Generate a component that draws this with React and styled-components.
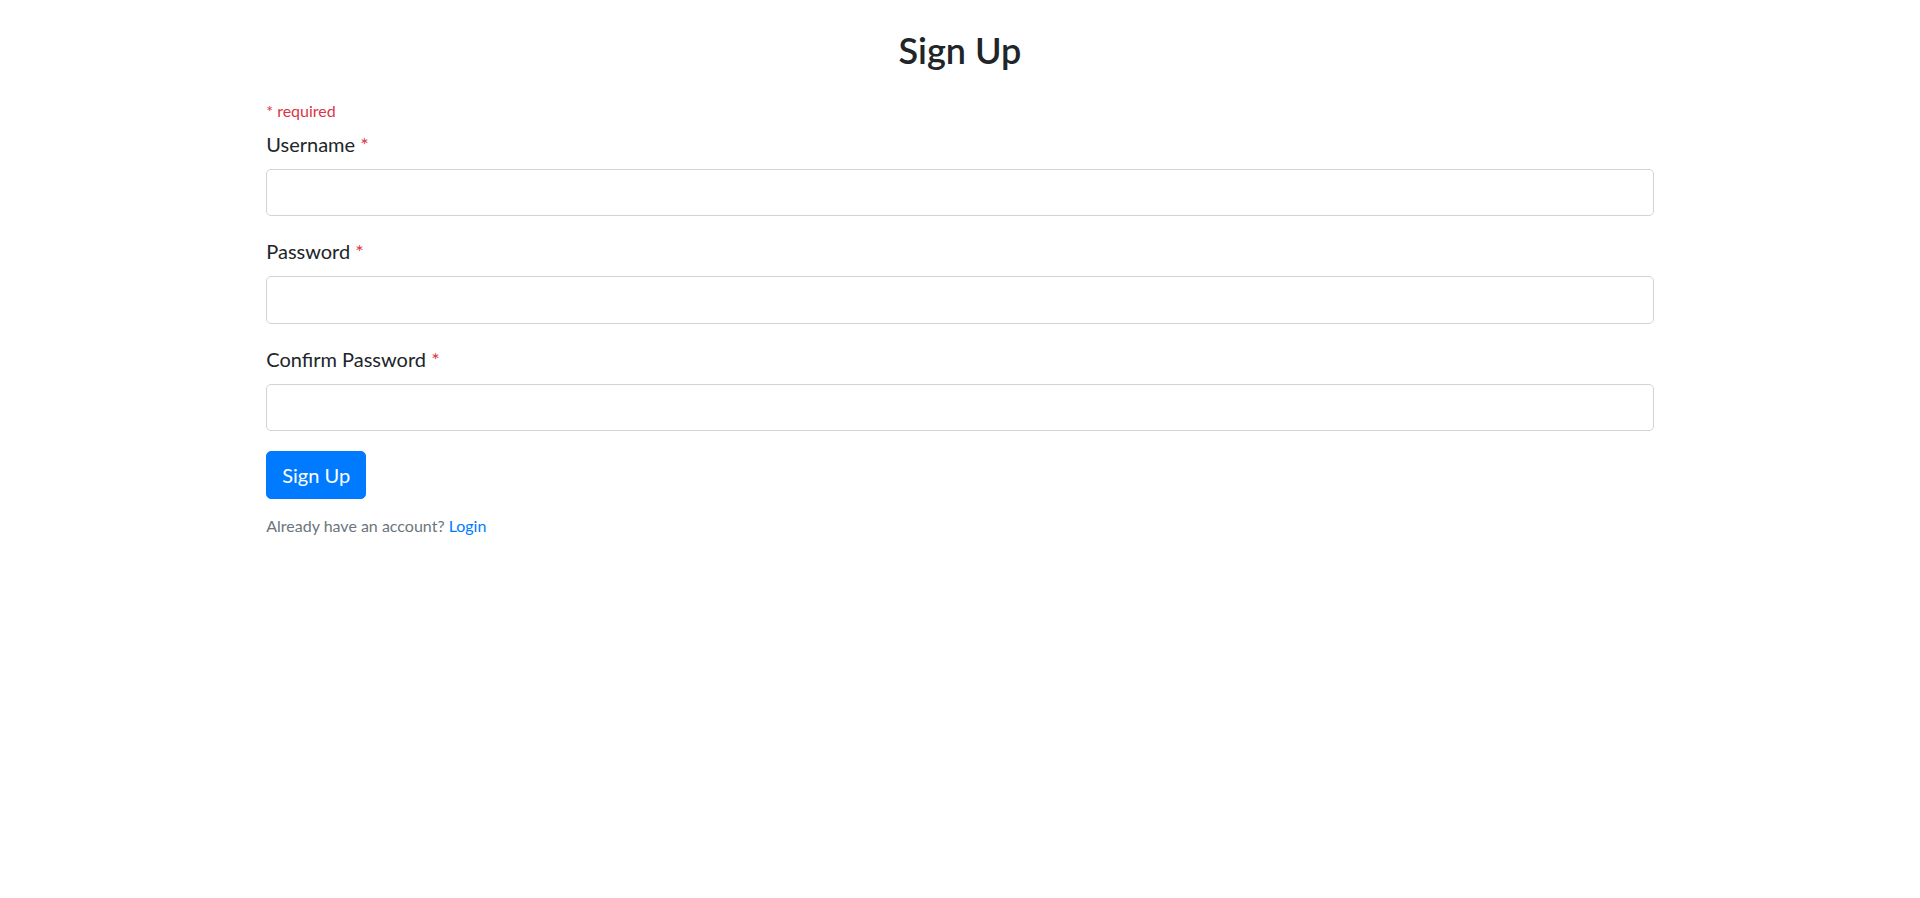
import React, { useState } from 'react';
import styled, { createGlobalStyle } from 'styled-components';

const GlobalStyle = createGlobalStyle`
  * {
    box-sizing: border-box;
  }
  body {
    margin: 0;
    background: #fff;
    color: #212529;
    font-family: Lato, "Open Sans", sans-serif;
  }
`;

const Container = styled.div`
  max-width: 1425px;
  margin: 0 auto;
  padding: 0 18.75px;
`;

const Title = styled.h1`
  margin: 29px 0 28px;
  font-size: 36px;
  line-height: 42px;
  font-weight: 600;
  text-align: center;
  color: #212529;
`;

const RequiredNote = styled.div`
  font-size: 16px;
  line-height: 24px;
  color: #dc3545;
  margin-bottom: 5.5px;
`;

const Group = styled.div`
  margin-bottom: 20px;
`;

const Label = styled.label`
  display: block;
  font-size: 20px;
  line-height: 30px;
  margin-bottom: 10px;
  color: #212529;
`;

const Star = styled.span`
  color: #dc3545;
`;

const Input = styled.input`
  display: block;
  width: 100%;
  height: 47.5px;
  padding: 7.5px 15px;
  font-size: 20px;
  font-family: inherit;
  color: #495057;
  background: #fff;
  border: 1px solid #ced4da;
  border-radius: 5px;
  outline: none;
`;

const Button = styled.button`
  display: inline-block;
  height: 47.5px;
  padding: 0 15px;
  font-size: 20px;
  font-family: inherit;
  line-height: 30px;
  color: #fff;
  background: #007bff;
  border: 1px solid #007bff;
  border-radius: 5px;
  cursor: pointer;
`;

const Footer = styled.p`
  margin: 15px 0 0;
  font-size: 16px;
  line-height: 24px;
  color: #6c757d;
`;

const LoginLink = styled.a`
  color: #007bff;
  text-decoration: none;
`;

const fields = [
  { name: 'username', label: 'Username', type: 'text' },
  { name: 'password', label: 'Password', type: 'password' },
  { name: 'confirm', label: 'Confirm Password', type: 'password' },
];

export default function App() {
  const [values, setValues] = useState({ username: '', password: '', confirm: '' });

  const onChange = (e) => setValues({ ...values, [e.target.name]: e.target.value });

  return (
    <>
      <GlobalStyle />
      <Container>
        <Title>Sign Up</Title>
        <form onSubmit={(e) => e.preventDefault()}>
          <RequiredNote>* required</RequiredNote>
          {fields.map((f) => (
            <Group key={f.name}>
              <Label htmlFor={f.name}>
                {f.label} <Star>*</Star>
              </Label>
              <Input id={f.name} name={f.name} type={f.type} value={values[f.name]} onChange={onChange} />
            </Group>
          ))}
          <Button type="submit">Sign Up</Button>
          <Footer>
            Already have an account? <LoginLink href="#login">Login</LoginLink>
          </Footer>
        </form>
      </Container>
    </>
  );
}
